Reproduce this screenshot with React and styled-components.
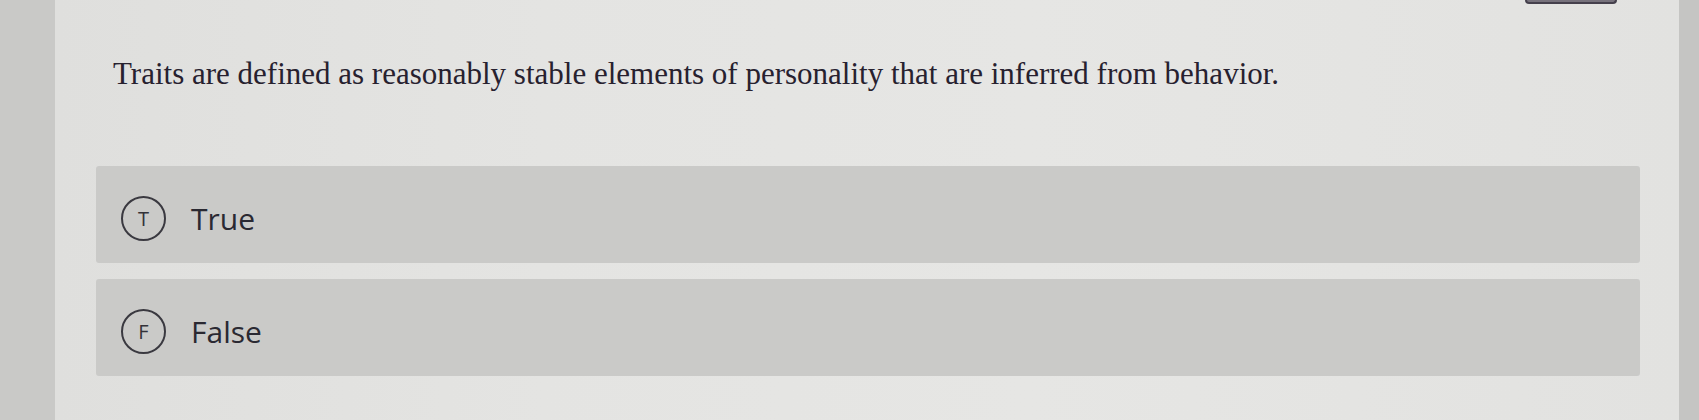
import React from "react";
import styled, { createGlobalStyle } from "styled-components";

const Global = createGlobalStyle`
  html, body { margin: 0; padding: 0; background: #c8c8c6; }
  #root { width: 1699px; height: 420px; overflow: hidden; }
`;

const Page = styled.div`
  display: flex;
  width: 1699px;
  height: 420px;
`;

const SideStrip = styled.div`
  width: ${(p) => p.$w}px;
  flex: none;
  background: ${(p) => p.$bg};
`;

const Card = styled.main`
  flex: 1;
  display: flex;
  flex-direction: column;
  background: linear-gradient(90deg, #dfdfdd 0%, #e4e4e2 30%, #e6e6e4 60%, #e2e2e0 100%);
`;

const TopBar = styled.div`
  display: flex;
  justify-content: flex-end;
  height: 4px;
  padding-right: 62px;
`;

const ButtonStub = styled.div`
  width: 92px;
  height: 4px;
  box-sizing: border-box;
  border: 2px solid #45404c;
  border-top: none;
  border-radius: 0 0 7px 7px;
  background: #77727c;
`;

const Question = styled.p`
  margin: 52px 0 0 58px;
  font-family: "Liberation Serif", "Times New Roman", serif;
  font-size: 31px;
  line-height: 36px;
  color: #27212f;
`;

const Options = styled.div`
  display: flex;
  flex-direction: column;
  gap: 16px;
  margin: 74px 39px 0 41px;
`;

const Option = styled.div`
  display: flex;
  align-items: center;
  box-sizing: border-box;
  height: 97px;
  padding: 8px 0 0 25px;
  border-radius: 3px;
  background: #cacac8;
`;

const Badge = styled.span`
  width: 45px;
  height: 45px;
  box-sizing: border-box;
  border: 2px solid #3a3940;
  border-radius: 50%;
  display: flex;
  align-items: center;
  justify-content: center;
  font-family: "Open Sans", "Noto Sans", sans-serif;
  font-size: 20px;
  font-weight: 500;
  color: #333238;
  flex: none;
`;

const Label = styled.span`
  margin-left: 25px;
  font-family: "Open Sans", "Noto Sans", sans-serif;
  font-size: 30px;
  color: #2a2932;
`;

const options = [
  { key: "T", label: "True" },
  { key: "F", label: "False" },
];

export default function App() {
  return (
    <>
      <Global />
      <Page>
        <SideStrip $w={55} $bg="#c9c9c7" />
        <Card>
          <TopBar>
            <ButtonStub />
          </TopBar>
          <Question>
            Traits are defined as reasonably stable elements of personality that are inferred from behavior.
          </Question>
          <Options>
            {options.map((o) => (
              <Option key={o.key}>
                <Badge>{o.key}</Badge>
                <Label>{o.label}</Label>
              </Option>
            ))}
          </Options>
        </Card>
        <SideStrip $w={20} $bg="#c5c5c3" />
      </Page>
    </>
  );
}
